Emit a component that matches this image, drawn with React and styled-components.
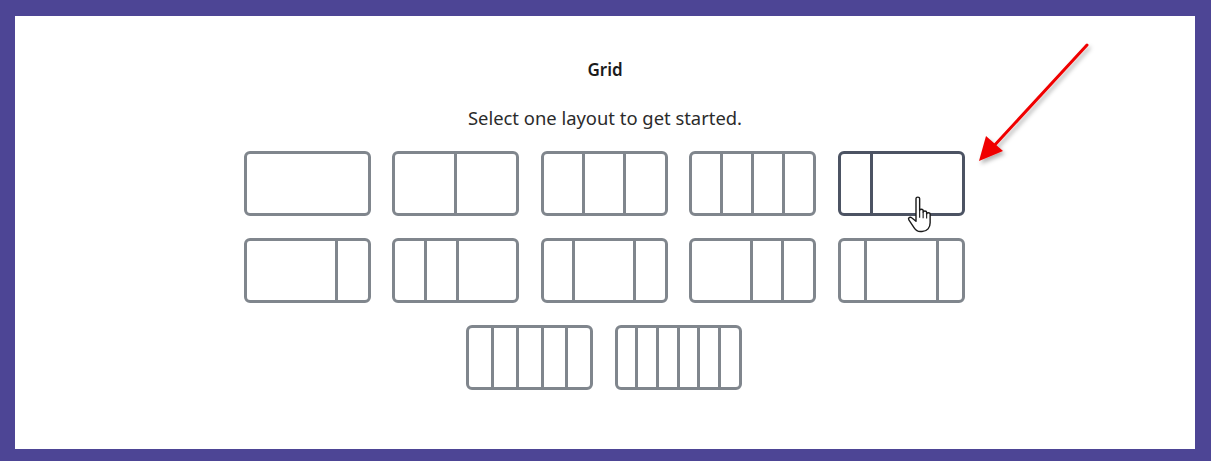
import React from 'react';
import styled, { createGlobalStyle } from 'styled-components';

const Global = createGlobalStyle`
	html, body {
		margin: 0;
		padding: 0;
		background: #4d4595;
	}
	body {
		font-family: "Noto Sans", "Open Sans", sans-serif;
	}
`;

const Frame = styled.div`
	width: 1211px;
	height: 461px;
	box-sizing: border-box;
	padding: 16px 16px 12px 15px;
	background: #4d4595;
`;

const Panel = styled.main`
	position: relative;
	height: 100%;
	background: #fff;
	display: flex;
	flex-direction: column;
	align-items: center;
	padding-top: 44px;
	box-sizing: border-box;
`;

const Title = styled.h1`
	margin: 0;
	font-size: 17px;
	font-weight: 600;
	line-height: 20px;
	color: #1b1b1b;
`;

const Lead = styled.p`
	margin: 27px 0 0;
	font-size: 18.4px;
	line-height: 22px;
	color: #2b2b2b;
`;

const Grid = styled.div`
	display: flex;
	flex-wrap: wrap;
	justify-content: center;
	column-gap: 21.5px;
	row-gap: 22px;
	width: 722px;
	margin-top: 22px;
	transform: translateX(-1px);
`;

const Layout = styled.button`
	position: relative;
	display: flex;
	width: 127px;
	height: 65px;
	padding: 0;
	box-sizing: border-box;
	border: 3px solid ${(p) => (p.$active ? '#4c5363' : '#80868d')};
	border-radius: 6px;
	background: #fff;
	cursor: pointer;
	overflow: visible;

	& > span + span {
		border-left: 3px solid ${(p) => (p.$active ? '#4c5363' : '#80868d')};
	}
`;

const Cell = styled.span`
	flex: ${(p) => p.$grow};
	min-width: 0;
`;

const Pointer = styled.svg`
	position: absolute;
	left: 65px;
	top: 40px;
	width: 34px;
	height: 42px;
	pointer-events: none;
`;

const Arrow = styled.svg`
	position: absolute;
	left: 955px;
	top: 20px;
	width: 130px;
	height: 130px;
	pointer-events: none;
	overflow: visible;
`;

const layouts = [
	[1],
	[1, 1],
	[1, 1, 1],
	[1, 1, 1, 1],
	[1, 3],
	[3, 1],
	[1, 1, 2],
	[1, 2, 1],
	[2, 1, 1],
	[1, 3, 1],
	[1, 1, 1, 1, 1],
	[1, 1, 1, 1, 1, 1],
];

const HandCursor = () => (
	<Pointer viewBox="0 0 24 30">
		<path
			d="M7 3.2c0-1.3 2.6-1.3 2.6 0v8.6c0-1.2 2.5-1.2 2.5 0v1.2c0-1.2 2.5-1.2 2.5 0v1.3c0-1.2 2.5-1.2 2.5 0v6.2c0 3.4-2 6.3-5.8 6.3H10c-2 0-3.2-1-4.3-2.6L1.9 18.5c-0.8-1.2 0.7-2.6 2-1.5L7 19.5z"
			fill="#fff"
			stroke="#1a1a1a"
			strokeWidth="1"
			strokeLinejoin="round"
		/>
		<path d="M9.6 12v5M12.1 13v4.3M14.6 14.2v3.3" stroke="#1a1a1a" strokeWidth="0.8" />
	</Pointer>
);

const App = () => {
	return (
		<Frame>
			<Global />
			<Panel>
				<Title>Grid</Title>
				<Lead>Select one layout to get started.</Lead>
				<Grid>
					{layouts.map((cols, i) => (
						<Layout key={i} $active={i === 4} aria-label={`Layout ${i + 1}`}>
							{cols.map((g, j) => (
								<Cell key={j} $grow={g} />
							))}
							{i === 4 && <HandCursor />}
						</Layout>
					))}
				</Grid>
				<Arrow viewBox="0 0 130 130">
					<defs>
						<filter id="shade" x="-20%" y="-20%" width="140%" height="140%">
							<feDropShadow dx="2" dy="3" stdDeviation="2" floodColor="#000" floodOpacity="0.3" />
						</filter>
					</defs>
					<g filter="url(#shade)">
						<line x1="117" y1="9" x2="22" y2="112" stroke="#f00000" strokeWidth="3" strokeLinecap="round" />
						<polygon points="9,125 16,100 33,115" fill="#f00000" />
					</g>
				</Arrow>
			</Panel>
		</Frame>
	);
};

export default App;
